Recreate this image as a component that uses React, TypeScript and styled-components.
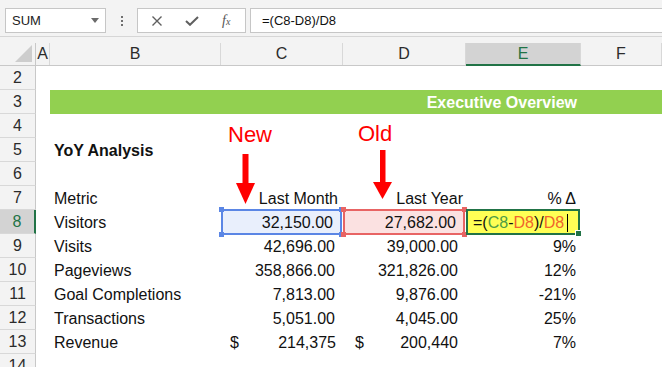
import { FC, ReactNode } from "react";
import styled, { createGlobalStyle } from "styled-components";

type Align = "left" | "right" | "center";
type Sel = "blue" | "red" | "active";

interface CellData {
  text?: ReactNode;
  align?: Align;
  pr?: number;
  pl?: number;
  bold?: boolean;
  sel?: Sel;
  money?: string;
}

interface RowData {
  n: number;
  band?: boolean;
  b?: CellData;
  c?: CellData;
  d?: CellData;
  e?: CellData;
}

const GlobalStyle = createGlobalStyle`
  html, body {
    margin: 0;
    padding: 0;
    background: #ffffff;
  }
  body {
    font-family: "Liberation Sans", Arial, sans-serif;
    overflow: hidden;
  }
`;

const COLS = "36px 14px 171px 122px 123px 115px 1fr";

const Page = styled.div`
  position: relative;
  width: 662px;
  height: 367px;
  overflow: hidden;
  background: #ffffff;
`;

const Toolbar = styled.div`
  height: 37px;
  box-sizing: border-box;
  background: #f3f3f3;
  border-bottom: 1px solid #d6d6d6;
  display: flex;
  align-items: flex-start;
  padding: 8px 0 0 5px;
`;

const NameBox = styled.div`
  width: 101px;
  height: 25px;
  box-sizing: border-box;
  background: #ffffff;
  border: 1px solid #c6c6c6;
  display: flex;
  align-items: center;
  justify-content: space-between;
  padding: 0 6px 0 6px;
  font-size: 13px;
  color: #222;
`;

const Caret = styled.span`
  width: 0;
  height: 0;
  border-left: 4px solid transparent;
  border-right: 4px solid transparent;
  border-top: 5px solid #6b6b6b;
`;

const Grip = styled.div`
  width: 31px;
  height: 25px;
  display: flex;
  flex-direction: column;
  align-items: center;
  justify-content: center;
  gap: 2px;

  span {
    width: 2px;
    height: 2px;
    background: #6f6f6f;
  }
`;

const FxBox = styled.div`
  width: 109px;
  height: 25px;
  box-sizing: border-box;
  background: #ffffff;
  border: 1px solid #c6c6c6;
  display: flex;
  align-items: center;
  padding-left: 13px;
  gap: 22px;
`;

const FxLabel = styled.span`
  font-family: "Liberation Serif", "Times New Roman", serif;
  font-style: italic;
  font-size: 14px;
  color: #555;
  margin-left: 1px;

  sub {
    font-size: 10px;
    vertical-align: baseline;
  }
`;

const FormulaInput = styled.div`
  flex: 1;
  margin-left: 4px;
  height: 25px;
  box-sizing: border-box;
  background: #ffffff;
  border: 1px solid #c6c6c6;
  border-right: none;
  display: flex;
  align-items: center;
  padding-left: 11px;
  font-size: 13px;
  color: #111;
`;

const HeaderRow = styled.div`
  display: grid;
  grid-template-columns: ${COLS};
  height: 29px;
  box-sizing: border-box;
  padding-top: 6px;
  background: #f3f3f3;
  border-bottom: 1px solid #c8c8c8;
`;

const Corner = styled.div`
  position: relative;
  border-right: 1px solid #c8c8c8;
`;

const CornerMark = styled.span`
  position: absolute;
  right: 3px;
  bottom: 3px;
  width: 0;
  height: 0;
  border-left: 17px solid transparent;
  border-bottom: 17px solid #cdcdcd;
`;

const ColHead = styled.div<{ $active?: boolean }>`
  display: flex;
  align-items: center;
  justify-content: center;
  box-sizing: border-box;
  font-size: 16px;
  color: ${(p) => (p.$active ? "#217346" : "#2b2b2b")};
  background: ${(p) => (p.$active ? "#d3d3d3" : "transparent")};
  border-right: 1px solid #d8d8d8;
  border-bottom: ${(p) => (p.$active ? "2px solid #217346" : "none")};
  margin-bottom: ${(p) => (p.$active ? "-1px" : "0")};
`;

const Row = styled.div`
  display: grid;
  grid-template-columns: ${COLS};
  height: 24px;
`;

const RowHead = styled.div<{ $active?: boolean }>`
  display: flex;
  align-items: center;
  justify-content: center;
  box-sizing: border-box;
  padding-top: 1px;
  font-size: 16px;
  color: ${(p) => (p.$active ? "#217346" : "#2b2b2b")};
  background: ${(p) => (p.$active ? "#d3d3d3" : "#f3f3f3")};
  border-right: ${(p) => (p.$active ? "2px solid #217346" : "1px solid #c8c8c8")};
  border-bottom: 1px solid #d8d8d8;
`;

const selBorder = {
  blue: "2px solid #5b86e5",
  red: "2px solid #e86464",
  active: "2px solid #217346",
};

const selFill = {
  blue: "#e9effc",
  red: "#fbe1e1",
  active: "#ffff55",
};

const Cell = styled.div<{
  $align?: Align;
  $pr?: number;
  $pl?: number;
  $bold?: boolean;
  $fill?: string;
  $sel?: Sel;
}>`
  position: relative;
  display: flex;
  align-items: center;
  box-sizing: border-box;
  padding-top: 1px;
  justify-content: ${(p) =>
    p.$align === "right" ? "flex-end" : p.$align === "center" ? "center" : "flex-start"};
  padding-right: ${(p) => p.$pr ?? 3}px;
  padding-left: ${(p) => p.$pl ?? 4}px;
  font-size: 16px;
  font-weight: ${(p) => (p.$bold ? 700 : 400)};
  color: #111;
  white-space: nowrap;
  background: ${(p) => (p.$sel ? selFill[p.$sel] : p.$fill ?? "transparent")};
  border: ${(p) => (p.$sel ? selBorder[p.$sel] : "none")};
  margin: ${(p) => (p.$sel ? "-1px 1px -1px 0" : "0")};
`;

const Handle = styled.span<{ $c: string; $pos: string }>`
  position: absolute;
  width: 5px;
  height: 5px;
  background: ${(p) => p.$c};
  ${(p) => p.$pos}
`;

const BandTitle = styled.span`
  color: #ffffff;
  font-weight: 700;
`;

const Money = styled.div`
  display: flex;
  width: 100%;
  justify-content: space-between;
`;

const Ref = styled.span<{ $c: string }>`
  color: ${(p) => p.$c};
`;

const TextCaret = styled.span`
  display: inline-block;
  width: 1px;
  height: 18px;
  margin-left: 3px;
  background: #000;
`;

const Note = styled.div<{ $x: number; $y: number }>`
  position: absolute;
  left: ${(p) => p.$x}px;
  top: ${(p) => p.$y}px;
  color: #ff0000;
  font-size: 22px;
  line-height: 1;
`;

const Arrow = styled.svg<{ $x: number; $y: number }>`
  position: absolute;
  left: ${(p) => p.$x}px;
  top: ${(p) => p.$y}px;
`;

const GREEN = "#92d050";

const rows: RowData[] = [
  { n: 2 },
  { n: 3, band: true, e: { align: "right", pr: 4, text: <BandTitle>Executive Overview</BandTitle> } },
  { n: 4 },
  { n: 5, b: { text: "YoY Analysis", bold: true } },
  { n: 6 },
  {
    n: 7,
    b: { text: "Metric" },
    c: { text: "Last Month", align: "right", pr: 5 },
    d: { text: "Last Year", align: "right", pr: 3 },
    e: { text: "% Δ", align: "right", pr: 5 },
  },
  {
    n: 8,
    b: { text: "Visitors" },
    c: { text: "32,150.00", align: "right", pr: 7, sel: "blue" },
    d: { text: "27,682.00", align: "right", pr: 7, sel: "red" },
    e: {
      sel: "active",
      pl: 5,
      text: (
        <>
          =(<Ref $c="#4e9c45">C8</Ref>-<Ref $c="#f0652c">D8</Ref>)/
          <Ref $c="#f0652c">D8</Ref>
          <TextCaret />
        </>
      ),
    },
  },
  {
    n: 9,
    b: { text: "Visits" },
    c: { text: "42,696.00", align: "right", pr: 8 },
    d: { text: "39,000.00", align: "right", pr: 8 },
    e: { text: "9%", align: "right", pr: 5 },
  },
  {
    n: 10,
    b: { text: "Pageviews" },
    c: { text: "358,866.00", align: "right", pr: 8 },
    d: { text: "321,826.00", align: "right", pr: 8 },
    e: { text: "12%", align: "right", pr: 5 },
  },
  {
    n: 11,
    b: { text: "Goal Completions" },
    c: { text: "7,813.00", align: "right", pr: 8 },
    d: { text: "9,876.00", align: "right", pr: 8 },
    e: { text: "-21%", align: "right", pr: 5 },
  },
  {
    n: 12,
    b: { text: "Transactions" },
    c: { text: "5,051.00", align: "right", pr: 8 },
    d: { text: "4,045.00", align: "right", pr: 8 },
    e: { text: "25%", align: "right", pr: 5 },
  },
  {
    n: 13,
    b: { text: "Revenue" },
    c: { money: "214,375", pl: 9, pr: 7 },
    d: { money: "200,440", pl: 12, pr: 8 },
    e: { text: "7%", align: "right", pr: 5 },
  },
  { n: 14 },
];

const handlesFor = (sel: Sel) => {
  if (sel === "active") {
    return <Handle $c="#217346" $pos="right: -4px; bottom: -4px; border: 1px solid #fff;" />;
  }
  const c = sel === "blue" ? "#5b86e5" : "#e86464";
  return (
    <>
      <Handle $c={c} $pos="left: -4px; top: -4px;" />
      <Handle $c={c} $pos="right: -4px; top: -4px;" />
      <Handle $c={c} $pos="left: -4px; bottom: -4px;" />
      <Handle $c={c} $pos="right: -4px; bottom: -4px;" />
    </>
  );
};

const SheetCell: FC<{ data?: CellData; fill?: string }> = ({ data, fill }) => {
  if (!data) {
    return <Cell $fill={fill} />;
  }
  return (
    <Cell
      $align={data.align}
      $pr={data.pr}
      $pl={data.pl}
      $bold={data.bold}
      $sel={data.sel}
      $fill={fill}
    >
      {data.money ? (
        <Money>
          <span>$</span>
          <span>{data.money}</span>
        </Money>
      ) : (
        data.text
      )}
      {data.sel && handlesFor(data.sel)}
    </Cell>
  );
};

const App: FC = () => {
  return (
    <Page>
      <GlobalStyle />
      <Toolbar>
        <NameBox>
          SUM
          <Caret />
        </NameBox>
        <Grip>
          <span />
          <span />
          <span />
        </Grip>
        <FxBox>
          <svg width="12" height="12" viewBox="0 0 12 12">
            <path d="M1.5 1.5 L10.5 10.5 M10.5 1.5 L1.5 10.5" stroke="#5f5f5f" strokeWidth="1.4" />
          </svg>
          <svg width="14" height="10" viewBox="0 0 14 10">
            <path d="M1 5 L5 8.8 L13 1" stroke="#5f5f5f" strokeWidth="2" fill="none" />
          </svg>
          <FxLabel>
            f<sub>x</sub>
          </FxLabel>
        </FxBox>
        <FormulaInput>=(C8-D8)/D8</FormulaInput>
      </Toolbar>

      <HeaderRow>
        <Corner>
          <CornerMark />
        </Corner>
        <ColHead>A</ColHead>
        <ColHead>B</ColHead>
        <ColHead>C</ColHead>
        <ColHead>D</ColHead>
        <ColHead $active>E</ColHead>
        <ColHead>F</ColHead>
      </HeaderRow>

      {rows.map((r) => {
        const fill = r.band ? GREEN : undefined;
        return (
          <Row key={r.n}>
            <RowHead $active={r.n === 8}>{r.n}</RowHead>
            <SheetCell />
            <SheetCell data={r.b} fill={fill} />
            <SheetCell data={r.c} fill={fill} />
            <SheetCell data={r.d} fill={fill} />
            <SheetCell data={r.e} fill={fill} />
            <SheetCell fill={fill} />
          </Row>
        );
      })}

      <Note $x={228} $y={124}>New</Note>
      <Note $x={358} $y={123}>Old</Note>
      <Arrow $x={235} $y={154} width="22" height="52" viewBox="0 0 22 52">
        <rect x="7.5" y="0" width="6" height="31" fill="#ff0000" />
        <polygon points="1,29 20,29 10.5,50" fill="#ff0000" />
      </Arrow>
      <Arrow $x={372} $y={150} width="22" height="52" viewBox="0 0 22 52">
        <rect x="8" y="0" width="5.5" height="34" fill="#ff0000" />
        <polygon points="1,32 20,32 10.5,49" fill="#ff0000" />
      </Arrow>
    </Page>
  );
};

export default App;
